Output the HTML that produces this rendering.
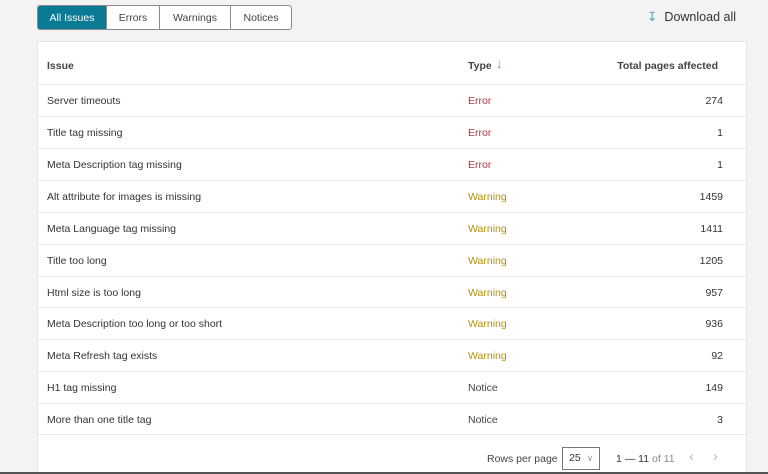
<!DOCTYPE html>
<html><head><style>
html,body{margin:0;width:768px;height:474px;overflow:hidden}
body{background:#f3f3f3;font-family:"Liberation Sans",sans-serif;position:relative;color:#333}
.a{position:absolute;white-space:nowrap}
.tabs{position:absolute;left:37px;top:5px;height:23px;display:flex;border:1px solid #8a8a8a;border-radius:3px;overflow:hidden;background:#fff;font-size:10.5px}
.tabs div{border-left:1px solid #8a8a8a;display:flex;align-items:center;justify-content:center;color:#444}
.tabs div:first-child{border-left:none;background:#0b7a95;color:#fff}
.card{position:absolute;left:37px;top:41px;width:708px;height:440px;background:#fff;border:1px solid #e4e4e4}
.row{position:absolute;left:0;width:708px;border-top:1px solid #e6e6e6;font-size:10.5px;height:31px}
.row span{position:absolute;top:10px}
.c1{left:9px}.c2{left:430px}.c3{right:23px}
.e{color:#b03a3a}.w{color:#b8900a}.n{color:#444}
.h{position:absolute;top:17px;font-size:10.5px;font-weight:bold;color:#444;line-height:14px}
</style></head><body>
<div class="tabs"><div style="width:68px">All Issues</div><div style="width:52px">Errors</div><div style="width:70px">Warnings</div><div style="width:60px">Notices</div></div>
<div class="a" style="left:647px;top:9px;font-size:12.5px;color:#333;line-height:16px"><span style="color:#5b9fb5">&#8615;</span>&nbsp; Download all</div>
<div class="card">
<div class="h" style="left:9px">Issue</div>
<div class="h" style="left:430px">Type</div>
<div class="a" style="left:458px;top:14px;font-size:13px;color:#5b9fb5;line-height:16px">&#8595;</div>
<div class="h" style="right:28px">Total pages affected</div>
<div class="row" style="top:42px"><span class="c1">Server timeouts</span><span class="c2 e">Error</span><span class="c3">274</span></div>
<div class="row" style="top:74px"><span class="c1">Title tag missing</span><span class="c2 e">Error</span><span class="c3">1</span></div>
<div class="row" style="top:106px"><span class="c1">Meta Description tag missing</span><span class="c2 e">Error</span><span class="c3">1</span></div>
<div class="row" style="top:138px"><span class="c1">Alt attribute for images is missing</span><span class="c2 w">Warning</span><span class="c3">1459</span></div>
<div class="row" style="top:170px"><span class="c1">Meta Language tag missing</span><span class="c2 w">Warning</span><span class="c3">1411</span></div>
<div class="row" style="top:202px"><span class="c1">Title too long</span><span class="c2 w">Warning</span><span class="c3">1205</span></div>
<div class="row" style="top:234px"><span class="c1">Html size is too long</span><span class="c2 w">Warning</span><span class="c3">957</span></div>
<div class="row" style="top:265px"><span class="c1">Meta Description too long or too short</span><span class="c2 w">Warning</span><span class="c3">936</span></div>
<div class="row" style="top:297px"><span class="c1">Meta Refresh tag exists</span><span class="c2 w">Warning</span><span class="c3">92</span></div>
<div class="row" style="top:329px"><span class="c1">H1 tag missing</span><span class="c2 n">Notice</span><span class="c3">149</span></div>
<div class="row" style="top:361px"><span class="c1">More than one title tag</span><span class="c2 n">Notice</span><span class="c3">3</span></div>
<div class="row" style="top:392px;height:48px"></div>
<div class="a" style="left:449px;top:411px;font-size:10.5px;color:#444">Rows per page</div>
<div class="a" style="left:524px;top:405px;width:38px;height:23px;border:1px solid #777;font-size:10.5px;line-height:21px;box-sizing:border-box;padding-left:6px;color:#333">25 <span style="color:#999;font-size:9px;margin-left:3px">&#8744;</span></div>
<div class="a" style="left:578px;top:411px;font-size:10.5px;color:#333">1 — 11 <span style="color:#888">of 11</span></div>
<div class="a" style="left:651px;top:406px;font-size:15px;color:#bbb">&#8249;</div>
<div class="a" style="left:675px;top:406px;font-size:15px;color:#bbb">&#8250;</div>
</div>
<div class="a" style="left:0;top:472px;width:768px;height:2px;background:#555"></div>
</body></html>
